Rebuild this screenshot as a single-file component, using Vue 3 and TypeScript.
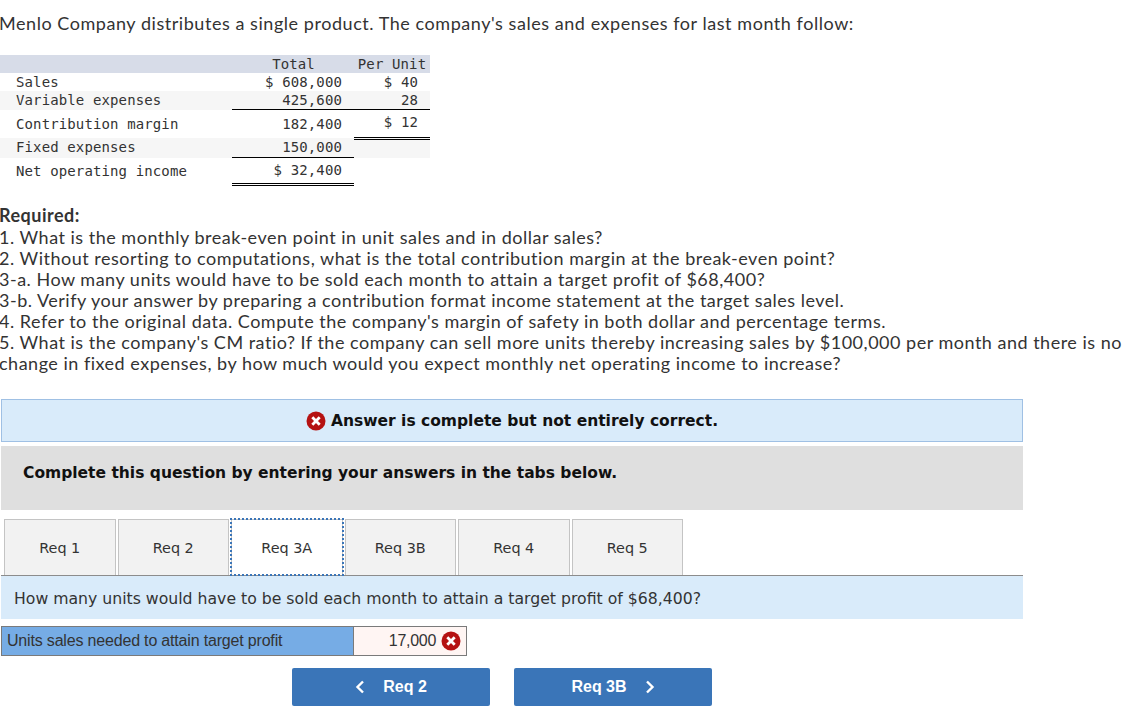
<template>
  <div class="page">
    <p class="intro">Menlo Company distributes a single product. The company's sales and expenses for last month follow:</p>

    <table class="income">
      <thead>
        <tr>
          <th></th>
          <th class="total-head">Total</th>
          <th class="unit-head">Per Unit</th>
        </tr>
      </thead>
      <tbody>
        <tr v-for="row in rows" :key="row.label" :class="row.cls">
          <td class="label">{{ row.label }}</td>
          <td class="total" :class="row.totalLine">{{ row.total }}</td>
          <td class="unit" :class="row.unitLine">{{ row.unit }}</td>
        </tr>
      </tbody>
    </table>

    <div class="required">
      <strong>Required:</strong>
      <div v-for="line in questions" :key="line">{{ line }}</div>
    </div>

    <div class="banner">
      <svg class="x-icon" viewBox="0 0 20 20"><circle cx="10" cy="10" r="9.5" fill="#b51212" /><path d="M6.3 6.3l7.4 7.4M13.7 6.3l-7.4 7.4" stroke="#fff" stroke-width="2.8" /></svg>
      <span>Answer is complete but not entirely correct.</span>
    </div>

    <div class="prompt">Complete this question by entering your answers in the tabs below.</div>

    <div class="tabs">
      <div v-for="tab in tabs" :key="tab" class="tab" :class="{ active: tab === 'Req 3A' }">{{ tab }}</div>
    </div>

    <div class="question">How many units would have to be sold each month to attain a target profit of $68,400?</div>

    <div class="answer-row">
      <div class="answer-label">Units sales needed to attain target profit</div>
      <div class="answer-value">
        <span>17,000</span>
        <svg class="x-icon" viewBox="0 0 20 20"><circle cx="10" cy="10" r="9.5" fill="#b51212" /><path d="M6.3 6.3l7.4 7.4M13.7 6.3l-7.4 7.4" stroke="#fff" stroke-width="2.8" /></svg>
      </div>
    </div>

    <div class="nav">
      <button class="nav-btn">
        <svg class="chev" viewBox="0 0 10 14"><path d="M8 1.5L2.5 7 8 12.5" fill="none" stroke="#fff" stroke-width="2.4" /></svg>
        <span>Req 2</span>
      </button>
      <button class="nav-btn">
        <span>Req 3B</span>
        <svg class="chev" viewBox="0 0 10 14"><path d="M2 1.5L7.5 7 2 12.5" fill="none" stroke="#fff" stroke-width="2.4" /></svg>
      </button>
    </div>
  </div>
</template>

<script setup lang="ts">
interface Row {
  label: string
  total: string
  unit: string
  cls: string
  totalLine: string
  unitLine: string
}

const rows: Row[] = [
  { label: 'Sales', total: '$ 608,000', unit: '$ 40', cls: 'r-sales', totalLine: '', unitLine: '' },
  { label: 'Variable expenses', total: '425,600', unit: '28', cls: 'r-var shaded', totalLine: 'single', unitLine: 'single' },
  { label: 'Contribution margin', total: '182,400', unit: '$ 12', cls: 'r-cm', totalLine: '', unitLine: 'double' },
  { label: 'Fixed expenses', total: '150,000', unit: '', cls: 'r-fixed shaded', totalLine: 'single', unitLine: '' },
  { label: 'Net operating income', total: '$ 32,400', unit: '', cls: 'r-net', totalLine: 'double', unitLine: '' }
]

const questions: string[] = [
  '1. What is the monthly break-even point in unit sales and in dollar sales?',
  '2. Without resorting to computations, what is the total contribution margin at the break-even point?',
  '3-a. How many units would have to be sold each month to attain a target profit of $68,400?',
  '3-b. Verify your answer by preparing a contribution format income statement at the target sales level.',
  "4. Refer to the original data. Compute the company's margin of safety in both dollar and percentage terms.",
  "5. What is the company's CM ratio? If the company can sell more units thereby increasing sales by $100,000 per month and there is no",
  'change in fixed expenses, by how much would you expect monthly net operating income to increase?'
]

const tabs: string[] = ['Req 1', 'Req 2', 'Req 3A', 'Req 3B', 'Req 4', 'Req 5']
</script>

<style>
html,
body {
  margin: 0;
  background: #fff;
  overflow: hidden;
}
</style>

<style scoped>
.page {
  width: 1145px;
  height: 723px;
  overflow: hidden;
  color: #333;
  font-family: Lato, 'Liberation Sans', sans-serif;
}

.intro {
  margin: 0 0 0 -1px;
  padding-top: 12px;
  font-size: 18px;
  letter-spacing: 0.55px;
  line-height: 22px;
  white-space: nowrap;
}

/* 表格 */
.income {
  margin-top: 21px;
  width: 430px;
  border-collapse: collapse;
  table-layout: fixed;
  font-family: 'DejaVu Sans Mono', monospace;
  font-size: 14px;
  letter-spacing: 0.12px;
  color: #333;
}

.income th {
  padding: 0;
  height: 18px;
  background: #d7dce8;
  font-weight: 400;
  line-height: 18px;
  text-align: center;
}

.income th:first-child {
  width: 232px;
}

.income th.total-head {
  width: 122px;
  padding-left: 1px;
  box-sizing: border-box;
}

.income td {
  padding: 0;
  line-height: 18px;
}

.income .shaded td {
  background: #f6f6f6;
}

.income td.label {
  padding-left: 16px;
}

.income td.total,
.income td.unit {
  padding-right: 12px;
  text-align: right;
  white-space: pre;
}

.r-sales td,
.r-var td,
.r-fixed td {
  height: 18px;
}

.r-cm td {
  height: 28px;
}

.r-net td {
  height: 27px;
}

.income .r-fixed td {
  vertical-align: top;
}

.income .r-cm .unit,
.income .r-net .total {
  vertical-align: top;
  padding-top: 3px;
  box-sizing: border-box;
}

.income td.single {
  border-bottom: 1px solid #000;
}

.income td.double {
  border-bottom: 3px double #000;
}

.required {
  margin: 19px 0 0 -1px;
  font-size: 18px;
  letter-spacing: 0.5px;
  line-height: 21px;
  white-space: nowrap;
}

.required strong {
  display: block;
  height: 22px;
  font-weight: 700;
}

.banner {
  box-sizing: border-box;
  margin: 25px 0 0 1px;
  width: 1022px;
  height: 43px;
  display: flex;
  align-items: center;
  justify-content: center;
  gap: 5px;
  border: 1px solid #9fc0e4;
  background: #d9ebfa;
  font-family: 'DejaVu Sans', sans-serif;
  font-size: 15.5px;
  font-weight: 700;
  color: #111;
}

.x-icon {
  width: 20px;
  height: 20px;
  flex: none;
}

.prompt {
  box-sizing: border-box;
  margin: 4px 0 0 1px;
  width: 1022px;
  height: 64px;
  padding: 16px 0 0 22px;
  background: #dfdfdf;
  font-family: 'DejaVu Sans', sans-serif;
  font-size: 15.5px;
  font-weight: 700;
  line-height: 22px;
  color: #111;
}

.tabs {
  display: flex;
  gap: 2px;
  margin: 9px 0 0 4px;
  height: 56px;
}

.tab {
  box-sizing: border-box;
  width: 111.5px;
  height: 56px;
  display: flex;
  align-items: center;
  justify-content: center;
  border: 1px solid #c4c4c4;
  border-bottom: 0;
  background: #f2f2f2;
  font-family: 'DejaVu Sans', sans-serif;
  font-size: 14.4px;
  color: #333;
}

.tab.active {
  background: #fff;
  outline: 2px dotted #3a75b8;
  outline-offset: -1px;
  position: relative;
  z-index: 1;
}

.question {
  box-sizing: border-box;
  margin-left: 1px;
  width: 1022px;
  height: 44px;
  padding: 2px 0 0 13px;
  border-top: 1px solid #8c8c8c;
  background: #d9ebfa;
  font-family: 'DejaVu Sans', sans-serif;
  font-size: 15.7px;
  line-height: 41px;
  color: #333;
}

.answer-row {
  display: flex;
  margin: 7px 0 0 1px;
  width: 466px;
  height: 30px;
  box-sizing: border-box;
  border: 1px solid #7a7a7a;
}

.answer-label {
  width: 352px;
  flex: none;
  box-sizing: border-box;
  padding-left: 5px;
  border-right: 1px solid #7a7a7a;
  background: #76ace5;
  font-family: 'Liberation Sans', sans-serif;
  font-size: 16px;
  letter-spacing: -0.18px;
  line-height: 28px;
  color: #333;
}

.answer-value {
  flex: 1;
  display: flex;
  align-items: center;
  justify-content: flex-end;
  gap: 5px;
  padding-right: 5px;
  background: #fff5f3;
  font-family: 'Liberation Sans', sans-serif;
  font-size: 16px;
  letter-spacing: -0.3px;
  color: #333;
}

.nav {
  display: flex;
  gap: 24px;
  margin: 12px 0 0 292px;
}

.nav-btn {
  width: 198px;
  height: 38px;
  display: flex;
  align-items: center;
  justify-content: center;
  gap: 18px;
  padding: 0;
  border: 0;
  border-radius: 2px;
  background: #3a75b8;
  color: #fff;
  font-family: 'Liberation Sans', sans-serif;
  font-size: 16px;
  font-weight: 700;
}

.chev {
  width: 10px;
  height: 14px;
}
</style>
